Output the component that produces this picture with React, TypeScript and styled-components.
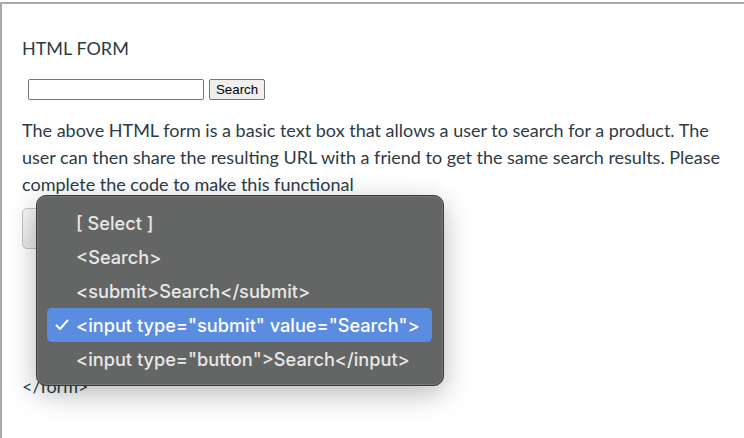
import styled, { createGlobalStyle } from 'styled-components';

const options = [
  '[ Select ]',
  '<Search>',
  '<submit>Search</submit>',
  '<input type="submit" value="Search">',
  '<input type="button">Search</input>',
];
const selectedIndex = 3;

function App() {
  return (
    <>
      <GlobalStyle />
      <Frame>
        <Heading>HTML FORM</Heading>
        <FormRow>
          <TextBox type="text" />
          <SmallButton type="button">Search</SmallButton>
        </FormRow>
        <Paragraph>
          The above HTML form is a basic text box that allows a user to search for a product. The
          user can then share the resulting URL with a friend to get the same search results. Please
          complete the code to make this functional
        </Paragraph>
        <SelectArea>
          <SelectBox>&lt;input type="submit" value="Search"&gt;</SelectBox>
          <Menu>
            {options.map((opt, i) => (
              <MenuItem key={opt} $selected={i === selectedIndex}>
                <Check>
                  {i === selectedIndex && (
                    <svg width="14" height="12" viewBox="0 0 14 12" fill="none">
                      <path d="M1.5 6.5 L5 10 L12.5 1.5" stroke="#fff" strokeWidth="2" strokeLinecap="round" strokeLinejoin="round" />
                    </svg>
                  )}
                </Check>
                {opt}
              </MenuItem>
            ))}
          </Menu>
        </SelectArea>
        <CodeLine>&lt;/form&gt;</CodeLine>
      </Frame>
    </>
  );
}

export default App;

const GlobalStyle = createGlobalStyle`
  html, body {
    margin: 0;
    padding: 0;
    background: #fff;
  }
  body {
    font-family: Lato, "Open Sans", sans-serif;
    color: #2d3b45;
  }
`;

const Frame = styled.div`
  margin-top: 2px;
  height: 436px;
  box-sizing: border-box;
  border-top: 2px solid #a9a9a9;
  border-left: 2px solid #a9a9a9;
  padding: 31px 14px 0 20px;
  overflow: hidden;
`;

const Heading = styled.div`
  font-size: 18px;
  line-height: 27px;
  color: #2d3b45;
`;

const FormRow = styled.div`
  display: flex;
  align-items: center;
  gap: 5px;
  margin-top: 17px;
  padding-left: 6px;
`;

const TextBox = styled.input`
  width: 176px;
  height: 21px;
  box-sizing: border-box;
  border: 1px solid #767676;
  border-radius: 2px;
  padding: 1px 2px;
  background: #fff;
`;

const SmallButton = styled.button`
  height: 21px;
  box-sizing: border-box;
  padding: 0 6px;
  border: 1px solid #767676;
  border-radius: 2px;
  background: #efefef;
  font-family: "Liberation Sans", Arial, sans-serif;
  font-size: 13.3px;
  color: #000;
`;

const Paragraph = styled.p`
  margin: 17px 0 0;
  font-size: 18px;
  line-height: 27px;
  color: #2d3b45;
`;

const SelectArea = styled.div`
  position: relative;
  margin-top: 10px;
`;

const SelectBox = styled.div`
  width: 400px;
  height: 41px;
  box-sizing: border-box;
  border: 1px solid #c4c4c4;
  border-radius: 5px;
  background: linear-gradient(#f6f6f6, #e9e9e9);
  padding: 0 12px;
  display: flex;
  align-items: center;
  font-size: 16px;
  color: #2d3b45;
`;

const Menu = styled.div`
  position: absolute;
  left: 14px;
  top: -13px;
  width: 408px;
  box-sizing: border-box;
  padding: 10px 10px 9px;
  background: #646565;
  border: 1px solid #3b3b3b;
  border-radius: 10px;
  box-shadow: 0 8px 28px rgba(0, 0, 0, 0.28), inset 0 0 0 1px rgba(255, 255, 255, 0.12);
  display: flex;
  flex-direction: column;
`;

const MenuItem = styled.div<{ $selected?: boolean }>`
  height: 34px;
  display: flex;
  align-items: center;
  margin-right: 1px;
  border-radius: 5px;
  background: ${(p) => (p.$selected ? '#5a8ce2' : 'transparent')};
  color: ${(p) => (p.$selected ? '#ffffff' : '#e8e8e8')};
  font-family: Inter, "Liberation Sans", sans-serif;
  font-size: 18.2px;
  font-weight: 500;
  white-space: nowrap;
`;

const Check = styled.span`
  width: 29px;
  padding-left: 8px;
  box-sizing: border-box;
  display: flex;
  align-items: center;
`;

const CodeLine = styled.div`
  margin-top: 124px;
  font-size: 18px;
  line-height: 27px;
  color: #2d3b45;
`;
